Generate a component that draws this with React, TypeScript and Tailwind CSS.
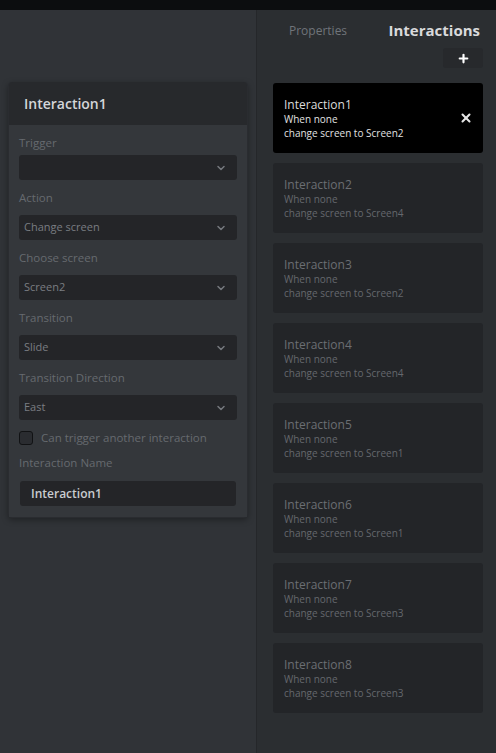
import { ChevronDown, X, Plus } from "lucide-react";

const INTERACTIONS = [
  { name: "Interaction1", screen: "Screen2" },
  { name: "Interaction2", screen: "Screen4" },
  { name: "Interaction3", screen: "Screen2" },
  { name: "Interaction4", screen: "Screen4" },
  { name: "Interaction5", screen: "Screen1" },
  { name: "Interaction6", screen: "Screen1" },
  { name: "Interaction7", screen: "Screen3" },
  { name: "Interaction8", screen: "Screen3" },
];

function Field({
  label,
  value,
  first,
}: {
  label: string;
  value: string;
  first?: boolean;
}) {
  return (
    <div className="flex flex-col">
      <label
        className={[
          "text-[11.5px] leading-[15px] text-[#666a6f]",
          first ? "mb-[5px]" : "mb-[10px]",
        ].join(" ")}
      >
        {label}
      </label>
      <div className="h-[25px] rounded-[3px] bg-[#242528] flex items-center justify-between pl-[5px] pr-[10px]">
        <span className="text-[11px] text-[#7a7d82]">{value}</span>
        <ChevronDown size={12} strokeWidth={3} className="text-[#75787d]" />
      </div>
    </div>
  );
}

export default function App() {
  return (
    <div
      className="w-[496px] h-[753px] flex flex-col bg-[#2f3236] overflow-hidden"
      style={{ fontFamily: '"Open Sans", "Noto Sans", sans-serif' }}
    >
      {/* top bar */}
      <div className="h-[10px] bg-[#0c0d0f] flex-none" />

      <div className="flex flex-1 min-h-0">
        {/* editor area */}
        <div className="w-[256px] flex-none bg-[#303337] pt-[72px] pl-[8px]">
          <div className="w-[240px] rounded-[4px] bg-[#2a2c30] shadow-[0_2px_6px_rgba(0,0,0,0.35)] p-px pt-0">
            <div className="h-[43px] flex items-center pl-[15px] bg-[#27292c] rounded-t-[4px]">
              <h2 className="text-[14px] font-semibold text-[#d4d6d9]">
                Interaction1
              </h2>
            </div>
            <div className="bg-[#34373b] px-[10px] pt-[10px] pb-[11px] flex flex-col gap-[10px]">
              <Field label="Trigger" value="" first />
              <Field label="Action" value="Change screen" />
              <Field label="Choose screen" value="Screen2" />
              <Field label="Transition" value="Slide" />
              <Field label="Transition Direction" value="East" />
              <div className="flex items-center gap-[8px] h-[15px]">
                <span className="w-[14px] h-[14px] rounded-[3px] border border-[#111214] bg-[#2a2c30]" />
                <span className="text-[11.5px] text-[#666a6f]">
                  Can trigger another interaction
                </span>
              </div>
              <div className="flex flex-col">
                <label className="text-[11.5px] leading-[15px] text-[#666a6f] mb-[11px]">
                  Interaction Name
                </label>
                <div className="h-[25px] mx-px rounded-[3px] bg-[#242528] flex items-center pl-[11px]">
                  <span className="text-[12px] font-semibold text-[#c9ccd0]">
                    Interaction1
                  </span>
                </div>
              </div>
            </div>
          </div>
        </div>

        {/* side panel */}
        <div className="flex-1 bg-[#2b2e31] border-l border-[#25272a] flex flex-col pl-[16px] pr-[13px]">
          <div className="flex items-center justify-between h-[38px] pt-[3px] pl-[16px] pr-[3px]">
            <span className="text-[12px] text-[#70747a]">Properties</span>
            <span className="text-[15px] font-bold text-[#d9dadc]">
              Interactions
            </span>
          </div>
          <div className="flex justify-end">
            <button className="w-[40px] h-[20px] rounded-[3px] bg-[#27292c] flex items-center justify-center">
              <Plus size={13} strokeWidth={4} className="text-white" />
            </button>
          </div>
          <div className="flex flex-col gap-[10px] mt-[15px]">
            {INTERACTIONS.map((it, i) => {
              const active = i === 0;
              return (
                <div
                  key={it.name}
                  className={[
                    "h-[70px] rounded-[3px] px-[11px] flex items-center justify-between",
                    active ? "bg-black" : "bg-[#232528]",
                  ].join(" ")}
                >
                  <div className="flex flex-col">
                    <span
                      className={[
                        "text-[12px] leading-[15px]",
                        active ? "text-[#dcdcdc]" : "text-[#6b6e73]",
                      ].join(" ")}
                    >
                      {it.name}
                    </span>
                    <span
                      className={[
                        "text-[10px] leading-[14px]",
                        active ? "text-[#e2e2e2]" : "text-[#65686d]",
                      ].join(" ")}
                    >
                      When none
                    </span>
                    <span
                      className={[
                        "text-[10px] leading-[14px]",
                        active ? "text-[#e2e2e2]" : "text-[#65686d]",
                      ].join(" ")}
                    >
                      change screen to {it.screen}
                    </span>
                  </div>
                  {active && (
                    <X size={14} strokeWidth={3.5} className="text-[#e6e6e6] mr-[-1px]" />
                  )}
                </div>
              );
            })}
          </div>
        </div>
      </div>
    </div>
  );
}
